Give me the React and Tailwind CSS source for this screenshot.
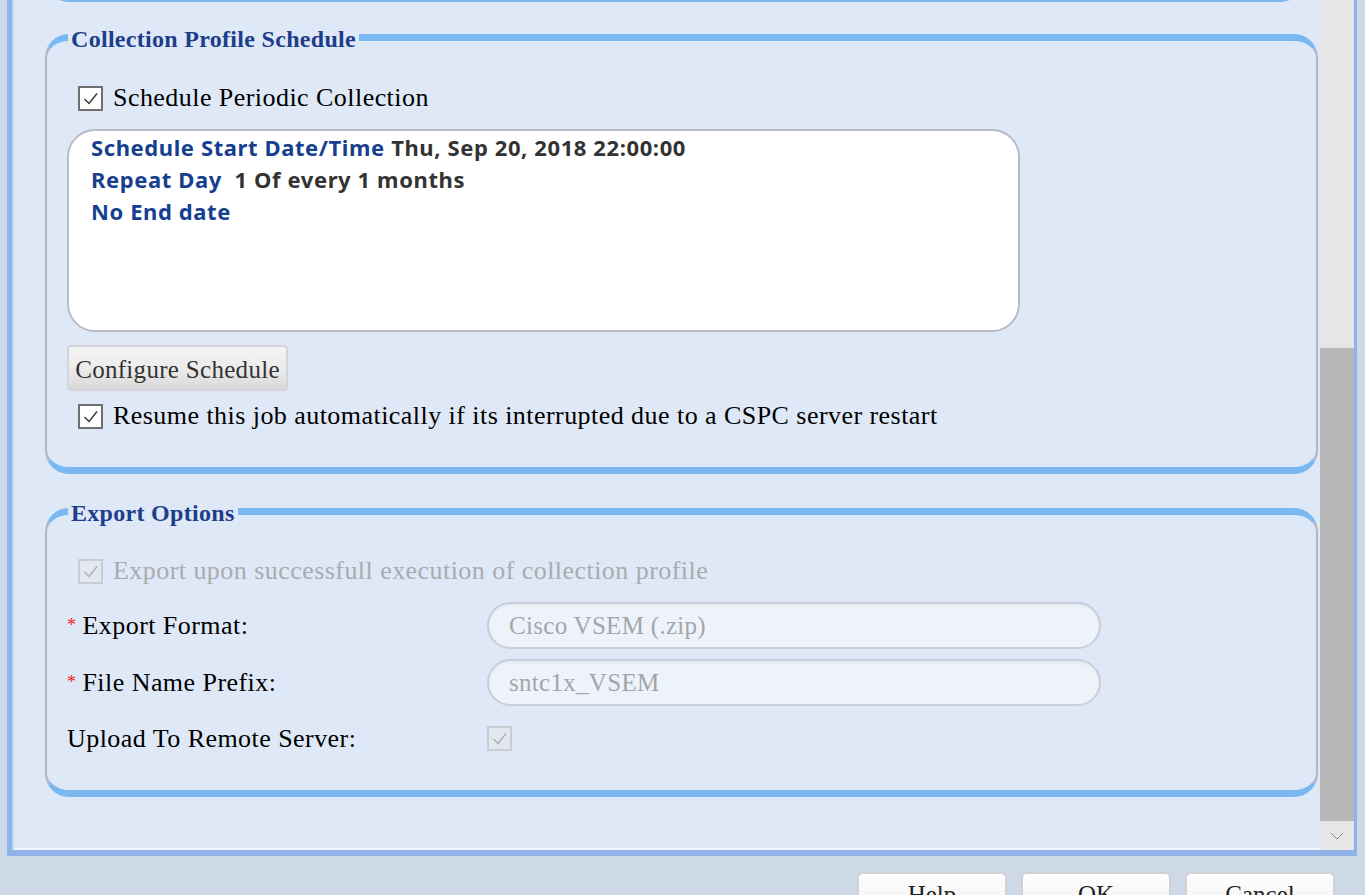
import React from "react";

const serif = "font-['Liberation_Serif','Times_New_Roman',serif]";
const sans = "font-['Noto_Sans','DejaVu_Sans',sans-serif]";

const Check = ({ disabled }) => (
  <span
    className={
      "flex h-[25px] w-[25px] shrink-0 items-center justify-center border-2 " +
      (disabled ? "border-[#c9ccd3] bg-[#e3e8f0]" : "border-[#6f6f6f] bg-white")
    }
  >
    <svg width="17" height="17" viewBox="0 0 17 17">
      <polyline
        points="2.5,9 7,13.5 15,3.5"
        fill="none"
        stroke={disabled ? "#adb0b6" : "#333"}
        strokeWidth="1.4"
      />
    </svg>
  </span>
);

const CheckRow = ({ label, disabled, className = "" }) => (
  <div className={"flex h-[30px] items-center gap-[10px] pl-[11px] " + className}>
    <Check disabled={disabled} />
    <span
      className={
        serif +
        " text-[26px] leading-none tracking-[0.45px] " +
        (disabled ? "text-[#a9abaf]" : "text-black")
      }
    >
      {label}
    </span>
  </div>
);

const Group = ({ title, children, className = "" }) => (
  <fieldset
    className={
      "rounded-[24px] border-x-2 border-y-[7px] border-x-[#b3b6c9] border-y-[#7ab8f2] px-5 pt-0 " + className
    }
  >
    <legend
      className={
        serif + " ml-[1px] px-[3px] pt-[4px] text-[24px] font-bold leading-[28px] tracking-[0.3px] text-[#1d3e8a]"
      }
    >
      {title}
    </legend>
    {children}
  </fieldset>
);

const Field = ({ label, value, className = "" }) => (
  <div className={"flex h-[47px] items-center " + className}>
    <div className={serif + " flex w-[420px] items-center text-[26px] tracking-[0.45px] text-black"}>
      <span className="mr-[6px] text-[18px] text-[#f02020]">*</span>
      {label}
    </div>
    <div
      className={
        serif +
        " flex h-full w-[614px] items-center rounded-full border-2 border-[#c9cdd9] bg-[#eef3fb] px-5 text-[25px] tracking-[0.3px] text-[#a3a5a9] shadow-[inset_0_2px_3px_rgba(0,0,0,0.04)]"
      }
    >
      {value}
    </div>
  </div>
);

const FooterButton = ({ children }) => (
  <button
    className={
      serif +
      " h-[40px] w-[150px] rounded-t-[6px] border-2 border-b-0 border-[#cfd1d4] bg-gradient-to-b from-white to-[#f0f0f0] pt-[3px] text-[25px] leading-[30px] text-[#222]"
    }
  >
    {children}
  </button>
);

export default function App() {
  return (
    <div className="flex h-screen w-full flex-col overflow-hidden bg-[#cdd9e6]">
      <div className="ml-[7px] mr-[8px] flex h-[856px] shrink-0 border-b-[6px] border-l-[5px] border-r-[3px] border-[#8fb3e6]">
        <div className="flex-1 overflow-hidden bg-[#dfe8f6] pl-[33px] pr-[2px] shadow-[inset_2px_0_0_#c4d8f3,inset_0_-2px_0_#f2f6fc]">
          <div className="mr-[14px] -mt-[22px] h-[24px] rounded-b-[24px] border-x-2 border-b-[7px] border-x-[#b3b6c9] border-b-[#7ab8f2]" />

          <Group title="Collection Profile Schedule" className="mt-[19px] pb-[36px]">
            <CheckRow label="Schedule Periodic Collection" className="mt-[30px]" />

            <div
              className={
                sans +
                " mt-[16px] h-[203px] w-[953px] rounded-[28px] border-2 border-[#b9bbcb] bg-white px-[22px] text-[22px] font-bold leading-[32px] tracking-[0.6px] text-[#333]"
              }
            >
              <div>
                <span className="text-[#173f8f]">Schedule Start Date/Time</span> Thu, Sep 20, 2018 22:00:00
              </div>
              <div>
                <span className="text-[#173f8f]">Repeat Day</span>&nbsp; 1 Of every 1 months
              </div>
              <div className="text-[#173f8f]">No End date</div>
            </div>

            <button
              className={
                serif +
                " mt-[13px] h-[46px] w-[221px] rounded-[4px] border-2 border-[#d3d5d9] bg-gradient-to-b from-[#f4f4f4] via-[#ececec] to-[#d9d9d9] pt-[4px] text-[25px] tracking-[0.3px] text-[#333]"
              }
            >
              Configure Schedule
            </button>

            <CheckRow
              label="Resume this job automatically if its interrupted due to a CSPC server restart"
              className="mt-[10px]"
            />
          </Group>

          <Group title="Export Options" className="mt-[21px] pb-[37px]">
            <CheckRow
              label="Export upon successfull execution of collection profile"
              disabled
              className="mt-[29px]"
            />
            <Field label="Export Format:" value="Cisco VSEM (.zip)" className="mt-[16px]" />
            <Field label="File Name Prefix:" value="sntc1x_VSEM" className="mt-[10px]" />
            <div className="mt-[17px] flex h-[30px] items-center">
              <div className={serif + " w-[420px] text-[26px] tracking-[0.45px] text-black"}>
                Upload To Remote Server:
              </div>
              <Check disabled />
            </div>
          </Group>
        </div>

        <div className="flex w-[34px] shrink-0 flex-col bg-[#e6e6e6]">
          <div className="h-[348px]" />
          <div className="h-[473px] bg-[#b7b7b7]" />
          <div className="flex flex-1 items-center justify-center">
            <svg width="14" height="8" viewBox="0 0 14 8">
              <polyline points="1,1 7,7 13,1" fill="none" stroke="#8a8a8a" strokeWidth="1" />
            </svg>
          </div>
        </div>
      </div>

      <div className="flex justify-end gap-[14px] pr-[30px] pt-[16px]">
        <FooterButton>Help</FooterButton>
        <FooterButton>OK</FooterButton>
        <FooterButton>Cancel</FooterButton>
      </div>
    </div>
  );
}
